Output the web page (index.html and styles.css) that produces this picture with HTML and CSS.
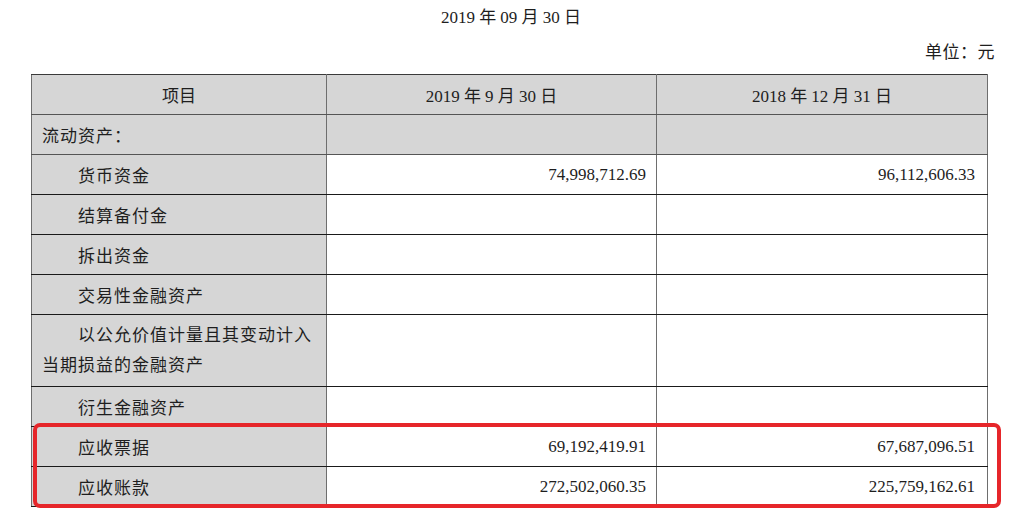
FILE: index.html
```html
<!DOCTYPE html>
<html lang="zh-CN">
<head>
<meta charset="utf-8">
<link rel="stylesheet" href="styles.css">
</head>
<body>
<div class="page">
  <div class="title">2019 年 09 月 30 日</div>
  <div class="unit">单位：元</div>
  <div class="table-wrap">
    <table class="sheet">
      <colgroup>
        <col class="c1"><col class="c2"><col class="c3">
      </colgroup>
      <thead>
        <tr class="row head"><th>项目</th><th>2019 年 9 月 30 日</th><th>2018 年 12 月 31 日</th></tr>
      </thead>
      <tbody>
        <tr class="row section"><td class="label">流动资产：</td><td class="num"></td><td class="num"></td></tr>
        <tr class="row"><td class="label indent">货币资金</td><td class="num">74,998,712.69</td><td class="num">96,112,606.33</td></tr>
        <tr class="row"><td class="label indent">结算备付金</td><td class="num"></td><td class="num"></td></tr>
        <tr class="row"><td class="label indent">拆出资金</td><td class="num"></td><td class="num"></td></tr>
        <tr class="row"><td class="label indent">交易性金融资产</td><td class="num"></td><td class="num"></td></tr>
        <tr class="row tall"><td class="label wrap"><span class="first">以公允价值计量且其变动计入</span><br>当期损益的金融资产</td><td class="num"></td><td class="num"></td></tr>
        <tr class="row"><td class="label indent">衍生金融资产</td><td class="num"></td><td class="num"></td></tr>
        <tr class="row"><td class="label indent">应收票据</td><td class="num">69,192,419.91</td><td class="num">67,687,096.51</td></tr>
        <tr class="row"><td class="label indent">应收账款</td><td class="num">272,502,060.35</td><td class="num">225,759,162.61</td></tr>
      </tbody>
    </table>
    <div class="highlight"></div>
  </div>
</div>
</body>
</html>
```

FILE: styles.css
```css
html, body {
  margin: 0;
  padding: 0;
  background: #ffffff;
}

body {
  font-family: "Liberation Serif", "Noto Sans CJK SC", serif;
  color: #1e1e1e;
  width: 1014px;
  height: 509px;
  overflow: hidden;
}

.page {
  display: flex;
  flex-direction: column;
}

.title {
  height: 36px;
  line-height: 36px;
  text-align: center;
  font-size: 17px;
  padding-left: 8px;
}

.unit {
  height: 38px;
  line-height: 34px;
  text-align: right;
  font-size: 17px;
  padding-right: 19px;
  letter-spacing: 0.5px;
}

.table-wrap {
  position: relative;
  margin-left: 31px;
  width: 970px;
}

.sheet {
  border-collapse: collapse;
  width: 956px;
  table-layout: fixed;
  font-size: 17px;
}

.c1 { width: 295px; }
.c2 { width: 330px; }
.c3 { width: 331px; }

.sheet th,
.sheet td {
  border-top: 1px solid #1a1a1a;
  border-bottom: 1px solid #1a1a1a;
  border-left: 1.5px solid #6e6e6e;
  border-right: 1.5px solid #6e6e6e;
  padding: 0 10px;
  white-space: nowrap;
}

.row { height: 40px; }
.row.tall { height: 72px; }

.head th {
  background: #d6d6d6;
  font-weight: normal;
  text-align: center;
  border-top: 1.5px solid #3a3a3a;
  border-bottom: 1.5px solid #555;
}

.section td {
  background: #d6d6d6;
  border-bottom: 1.5px solid #555;
}

.sheet td.label {
  background: #d6d6d6;
  text-align: left;
  letter-spacing: 1px;
}

.sheet td.indent {
  padding-left: 46px;
}

.sheet td.wrap {
  line-height: 30px;
  white-space: normal;
}

.wrap .first {
  padding-left: 36px;
}

.sheet td.num {
  text-align: right;
}

.sheet tbody tr:not(.section) td.num {
  background: #ffffff;
}

.sheet td.num:last-child {
  padding-right: 12px;
}

.highlight {
  position: absolute;
  left: 2px;
  top: 349px;
  width: 960px;
  height: 77px;
  border: 4.5px solid #e6262a;
  border-radius: 7px;
  pointer-events: none;
}
```
